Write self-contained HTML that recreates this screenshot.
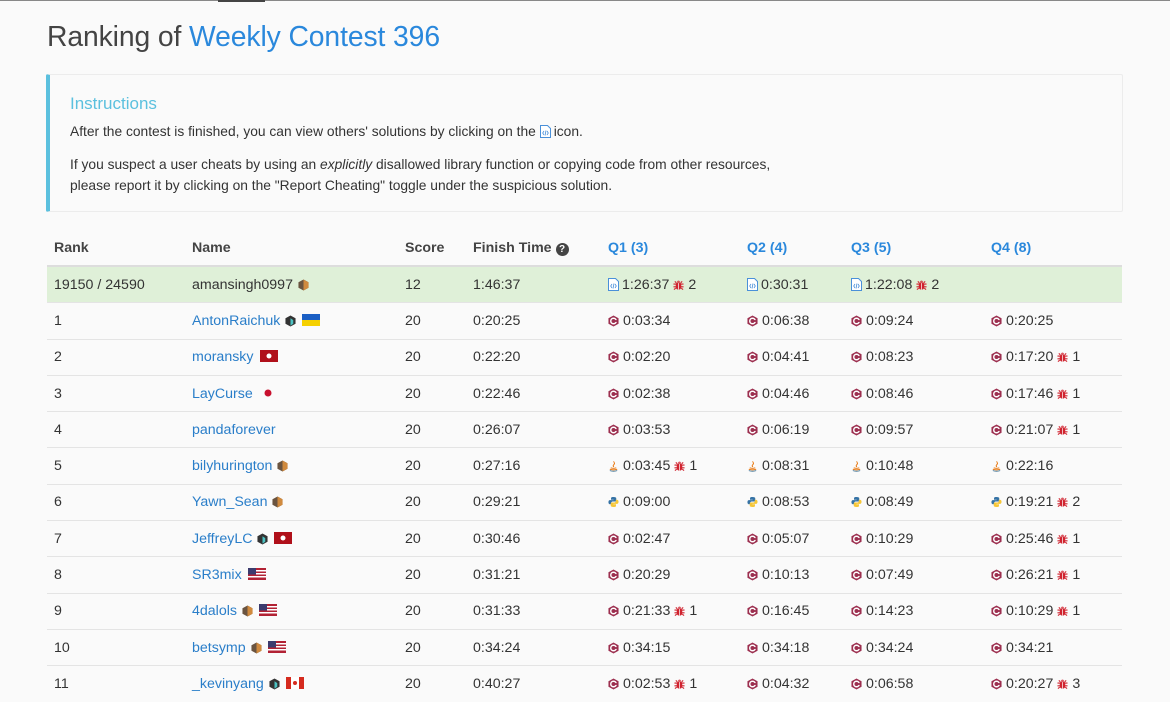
<!DOCTYPE html>
<html><head><meta charset="utf-8"><style>
body{margin:0;background:#fafafa;font-family:"Liberation Sans",sans-serif;color:#333;width:1170px;height:690px;overflow:hidden;position:relative}
.topbar{position:absolute;left:0;top:0;width:1170px;height:1px;background:#888}
.topbar2{position:absolute;left:218px;top:0;width:47px;height:2px;background:#444}
h1{position:absolute;left:47px;top:20px;margin:0;font-size:28.3px;font-weight:normal;color:#444;letter-spacing:-0.1px}
h1 span{color:#2a88dc}
.box{position:absolute;left:46px;top:74px;width:1072px;height:136px;border:1px solid #ececec;border-left:4px solid #5bc0de;background:#fafafa;border-radius:2px}
.box h3{margin:0;position:absolute;left:20px;top:19px;font-size:17px;font-weight:normal;color:#5bc0de}
.box p{margin:0;position:absolute;left:20px;font-size:13.8px;color:#333;line-height:21px}
table{position:absolute;left:47px;top:230px;width:1075px;border-collapse:collapse;font-size:14.2px}
th{text-align:left;font-weight:bold;color:#444;height:35px;padding:0 0 0 7px;border-bottom:2px solid #ddd}
th.q{color:#2a88dc}
td{height:35.3px;padding:0 0 0 7px;border-top:1px solid #e4e4e4;white-space:nowrap}
tr.me td{background:#dff0d8}
a{color:#2a7ec9;text-decoration:none}
.hx{display:inline-block;width:11px;height:12px;vertical-align:-2px;margin-left:5px}
.fl{display:inline-block;width:18px;height:12px;vertical-align:-1px;margin-left:6px}
.ci{display:inline-block;width:11px;height:12px;vertical-align:-2px;margin-right:4px}
.bug{display:inline-block;width:11px;height:12px;vertical-align:-2px;margin:0 4px}
.doc{display:inline-block;width:11px;height:13px;vertical-align:-2px;margin-right:3px}
</style></head><body>
<div class="topbar"></div><div class="topbar2"></div>
<h1>Ranking of <span>Weekly Contest 396</span></h1>
<svg width="0" height="0" style="position:absolute"><defs>
<symbol id="cpp" viewBox="0 0 12 12"><polygon points="6,0 11.5,3 11.5,9 6,12 0.5,9 0.5,3" fill="#9c2f4f"/><circle cx="6" cy="6" r="3" fill="none" stroke="#fff" stroke-width="1.6"/><rect x="7" y="5" width="4" height="2" fill="#9c2f4f"/></symbol>
<symbol id="hx" viewBox="0 0 12 12"><polygon points="6,0 11.5,3 11.5,9 6,12 0.5,9 0.5,3" fill="#6a5440"/><polygon points="6,0 11.5,3 11.5,9 6,12" fill="#d08a3e"/></symbol>
<symbol id="hx2" viewBox="0 0 12 12"><polygon points="6,0 11.5,3 11.5,9 6,12 0.5,9 0.5,3" fill="#333"/><polygon points="6,3 9,5 9,9 6,11" fill="#4cc3c3"/></symbol>
<symbol id="py" viewBox="0 0 12 12"><path d="M6 0.5C3 0.5 3.3 1.8 3.3 1.8V3.5H6.2V4H2C0.5 4 0.5 6 0.5 6.5 0.5 8 1.5 8.5 2.5 8.5H3.5V7C3.5 6 4.3 5.5 5 5.5H8C9 5.5 9 4.5 9 4V2C9 1 8 0.5 6 0.5Z" fill="#3572a5"/><path d="M6 11.5C9 11.5 8.7 10.2 8.7 10.2V8.5H5.8V8H10C11.5 8 11.5 6 11.5 5.5 11.5 4 10.5 3.5 9.5 3.5H8.5V5C8.5 6 7.7 6.5 7 6.5H4C3 6.5 3 7.5 3 8V10C3 11 4 11.5 6 11.5Z" fill="#f5c638"/></symbol>
<symbol id="java" viewBox="0 0 12 12"><path d="M2 9.5Q6 11 10 9.5M3 8Q6 9 9 8M6 1Q8 3 6 5Q5 6 6.5 7" fill="none" stroke="#e76f00" stroke-width="1"/><path d="M2 11Q6 12.5 10 11" stroke="#5382a1" fill="none"/></symbol>
<symbol id="bug" viewBox="0 0 12 12"><path d="M4 2.5Q6 0 8 2.5Z" fill="#d0232f"/><rect x="3" y="3" width="6" height="8" rx="2.5" fill="#d0232f"/><path d="M0.5 5H11.5M0.5 8H11.5M1 11L3 9.5M11 11L9 9.5M2 2L3.5 3.5M10 2L8.5 3.5" stroke="#d0232f" stroke-width="1.2"/><path d="M6 4V11" stroke="#fafafa" stroke-width="0.8"/></symbol>
<symbol id="doc" viewBox="0 0 11 13"><path d="M0.5 0.5H7.5L10.5 3.5V12.5H0.5Z" fill="#fff" stroke="#4a90d9"/><path d="M4 6L2.7 8L4 10M7 6L8.3 8L7 10M6 5.5L5 10.5" stroke="#4a90d9" stroke-width="0.8" fill="none"/></symbol>
</defs></svg>
<div class="box">
<h3>Instructions</h3>
<p style="top:46px">After the contest is finished, you can view others' solutions by clicking on the <svg class="doc"><use href="#doc"/></svg>icon.</p>
<p style="top:79px">If you suspect a user cheats by using an <i>explicitly</i> disallowed library function or copying code from other resources,<br>please report it by clicking on the "Report Cheating" toggle under the suspicious solution.</p>
</div>
<table>
<tr><th style="width:131px">Rank</th><th style="width:206px">Name</th><th style="width:61px">Score</th><th style="width:128px">Finish Time <span style="display:inline-block;width:13px;height:13px;border-radius:50%;background:#444;color:#fff;font-size:10px;text-align:center;line-height:13px">?</span></th><th class="q" style="width:132px">Q1 (3)</th><th class="q" style="width:97px">Q2 (4)</th><th class="q" style="width:133px">Q3 (5)</th><th class="q">Q4 (8)</th></tr>
<tr class="me"><td>19150 / 24590</td><td>amansingh0997<svg class="hx"><use href="#hx"/></svg></td><td>12</td><td>1:46:37</td><td><svg class="doc"><use href="#doc"/></svg>1:26:37<svg class="bug"><use href="#bug"/></svg>2</td><td><svg class="doc"><use href="#doc"/></svg>0:30:31</td><td><svg class="doc"><use href="#doc"/></svg>1:22:08<svg class="bug"><use href="#bug"/></svg>2</td><td></td></tr>
<tr><td>1</td><td><a>AntonRaichuk</a><svg class="hx"><use href="#hx2"/></svg><svg class="fl"><rect width="18" height="6" fill="#1b5fc4"/><rect y="6" width="18" height="6" fill="#f5d000"/></svg></td><td>20</td><td>0:20:25</td><td><svg class="ci"><use href="#cpp"/></svg>0:03:34</td><td><svg class="ci"><use href="#cpp"/></svg>0:06:38</td><td><svg class="ci"><use href="#cpp"/></svg>0:09:24</td><td><svg class="ci"><use href="#cpp"/></svg>0:20:25</td></tr>
<tr><td>2</td><td><a>moransky</a><svg class="fl"><rect width="18" height="12" fill="#b0101a"/><circle cx="9" cy="6" r="2.5" fill="#fff"/></svg></td><td>20</td><td>0:22:20</td><td><svg class="ci"><use href="#cpp"/></svg>0:02:20</td><td><svg class="ci"><use href="#cpp"/></svg>0:04:41</td><td><svg class="ci"><use href="#cpp"/></svg>0:08:23</td><td><svg class="ci"><use href="#cpp"/></svg>0:17:20<svg class="bug"><use href="#bug"/></svg>1</td></tr>
<tr><td>3</td><td><a>LayCurse</a><svg class="fl"><rect width="18" height="12" fill="#fafafa"/><circle cx="9" cy="6" r="3.5" fill="#c8102e"/></svg></td><td>20</td><td>0:22:46</td><td><svg class="ci"><use href="#cpp"/></svg>0:02:38</td><td><svg class="ci"><use href="#cpp"/></svg>0:04:46</td><td><svg class="ci"><use href="#cpp"/></svg>0:08:46</td><td><svg class="ci"><use href="#cpp"/></svg>0:17:46<svg class="bug"><use href="#bug"/></svg>1</td></tr>
<tr><td>4</td><td><a>pandaforever</a></td><td>20</td><td>0:26:07</td><td><svg class="ci"><use href="#cpp"/></svg>0:03:53</td><td><svg class="ci"><use href="#cpp"/></svg>0:06:19</td><td><svg class="ci"><use href="#cpp"/></svg>0:09:57</td><td><svg class="ci"><use href="#cpp"/></svg>0:21:07<svg class="bug"><use href="#bug"/></svg>1</td></tr>
<tr><td>5</td><td><a>bilyhurington</a><svg class="hx"><use href="#hx"/></svg></td><td>20</td><td>0:27:16</td><td><svg class="ci"><use href="#java"/></svg>0:03:45<svg class="bug"><use href="#bug"/></svg>1</td><td><svg class="ci"><use href="#java"/></svg>0:08:31</td><td><svg class="ci"><use href="#java"/></svg>0:10:48</td><td><svg class="ci"><use href="#java"/></svg>0:22:16</td></tr>
<tr><td>6</td><td><a>Yawn_Sean</a><svg class="hx"><use href="#hx"/></svg></td><td>20</td><td>0:29:21</td><td><svg class="ci"><use href="#py"/></svg>0:09:00</td><td><svg class="ci"><use href="#py"/></svg>0:08:53</td><td><svg class="ci"><use href="#py"/></svg>0:08:49</td><td><svg class="ci"><use href="#py"/></svg>0:19:21<svg class="bug"><use href="#bug"/></svg>2</td></tr>
<tr><td>7</td><td><a>JeffreyLC</a><svg class="hx"><use href="#hx2"/></svg><svg class="fl"><rect width="18" height="12" fill="#b0101a"/><circle cx="9" cy="6" r="2.5" fill="#fff"/></svg></td><td>20</td><td>0:30:46</td><td><svg class="ci"><use href="#cpp"/></svg>0:02:47</td><td><svg class="ci"><use href="#cpp"/></svg>0:05:07</td><td><svg class="ci"><use href="#cpp"/></svg>0:10:29</td><td><svg class="ci"><use href="#cpp"/></svg>0:25:46<svg class="bug"><use href="#bug"/></svg>1</td></tr>
<tr><td>8</td><td><a>SR3mix</a><svg class="fl"><rect width="18" height="12" fill="#b22234"/><rect y="2" width="18" height="1.5" fill="#fff"/><rect y="5" width="18" height="1.5" fill="#fff"/><rect y="8" width="18" height="1.5" fill="#fff"/><rect width="8" height="6.5" fill="#3c3b6e"/></svg></td><td>20</td><td>0:31:21</td><td><svg class="ci"><use href="#cpp"/></svg>0:20:29</td><td><svg class="ci"><use href="#cpp"/></svg>0:10:13</td><td><svg class="ci"><use href="#cpp"/></svg>0:07:49</td><td><svg class="ci"><use href="#cpp"/></svg>0:26:21<svg class="bug"><use href="#bug"/></svg>1</td></tr>
<tr><td>9</td><td><a>4dalols</a><svg class="hx"><use href="#hx"/></svg><svg class="fl"><rect width="18" height="12" fill="#b22234"/><rect y="2" width="18" height="1.5" fill="#fff"/><rect y="5" width="18" height="1.5" fill="#fff"/><rect y="8" width="18" height="1.5" fill="#fff"/><rect width="8" height="6.5" fill="#3c3b6e"/></svg></td><td>20</td><td>0:31:33</td><td><svg class="ci"><use href="#cpp"/></svg>0:21:33<svg class="bug"><use href="#bug"/></svg>1</td><td><svg class="ci"><use href="#cpp"/></svg>0:16:45</td><td><svg class="ci"><use href="#cpp"/></svg>0:14:23</td><td><svg class="ci"><use href="#cpp"/></svg>0:10:29<svg class="bug"><use href="#bug"/></svg>1</td></tr>
<tr><td>10</td><td><a>betsymp</a><svg class="hx"><use href="#hx"/></svg><svg class="fl"><rect width="18" height="12" fill="#b22234"/><rect y="2" width="18" height="1.5" fill="#fff"/><rect y="5" width="18" height="1.5" fill="#fff"/><rect y="8" width="18" height="1.5" fill="#fff"/><rect width="8" height="6.5" fill="#3c3b6e"/></svg></td><td>20</td><td>0:34:24</td><td><svg class="ci"><use href="#cpp"/></svg>0:34:15</td><td><svg class="ci"><use href="#cpp"/></svg>0:34:18</td><td><svg class="ci"><use href="#cpp"/></svg>0:34:24</td><td><svg class="ci"><use href="#cpp"/></svg>0:34:21</td></tr>
<tr><td>11</td><td><a>_kevinyang</a><svg class="hx"><use href="#hx2"/></svg><svg class="fl"><rect width="18" height="12" fill="#fff"/><rect width="5" height="12" fill="#d52b1e"/><rect x="13" width="5" height="12" fill="#d52b1e"/><circle cx="9" cy="6" r="2" fill="#d52b1e"/></svg></td><td>20</td><td>0:40:27</td><td><svg class="ci"><use href="#cpp"/></svg>0:02:53<svg class="bug"><use href="#bug"/></svg>1</td><td><svg class="ci"><use href="#cpp"/></svg>0:04:32</td><td><svg class="ci"><use href="#cpp"/></svg>0:06:58</td><td><svg class="ci"><use href="#cpp"/></svg>0:20:27<svg class="bug"><use href="#bug"/></svg>3</td></tr>
</table>
</body></html>
